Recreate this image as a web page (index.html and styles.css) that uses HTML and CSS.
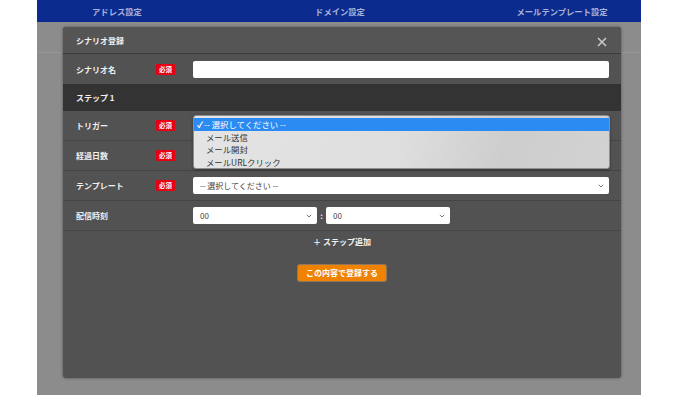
FILE: index.html
```html
<!DOCTYPE html>
<html lang="ja">
<head>
<meta charset="utf-8">
<title>シナリオ登録</title>
<link rel="stylesheet" href="styles.css">
</head>
<body>
<div class="screen">
  <nav class="nav">
    <span class="nav-item">アドレス設定</span>
    <span class="nav-item">ドメイン設定</span>
    <span class="nav-item">メールテンプレート設定</span>
  </nav>
  <div class="modal">
    <div class="modal-head">
      <span class="modal-title">シナリオ登録</span>
      <svg class="close" width="10" height="10" viewBox="0 0 10 10"><path d="M1 1 L9 9 M9 1 L1 9" stroke="#c8c8c8" stroke-width="1.6" fill="none"/></svg>
    </div>
    <div class="row first">
      <span class="label">シナリオ名</span>
      <span class="badge">必須</span>
      <div class="field"><div class="input"></div></div>
    </div>
    <div class="step">ステップ 1</div>
    <div class="row">
      <span class="label">トリガー</span>
      <span class="badge">必須</span>
      <div class="field anchor">
        <div class="select"></div>
        <ul class="popup">
          <li class="opt on"><span class="check">✓</span>-- 選択してください --</li>
          <li class="opt">メール送信</li>
          <li class="opt">メール開封</li>
          <li class="opt">メールURLクリック</li>
        </ul>
      </div>
    </div>
    <div class="row">
      <span class="label">経過日数</span>
      <span class="badge">必須</span>
      <div class="field"><div class="select"></div></div>
    </div>
    <div class="row">
      <span class="label">テンプレート</span>
      <span class="badge">必須</span>
      <div class="field">
        <div class="select"><span>-- 選択してください --</span>
          <svg class="chev" width="6" height="4" viewBox="0 0 6 4"><path d="M0.8 0.8 L3 3 L5.2 0.8" stroke="#777" stroke-width="1" fill="none"/></svg>
        </div>
      </div>
    </div>
    <div class="row">
      <span class="label">配信時刻</span>
      <span></span>
      <div class="field time">
        <div class="select short"><span>00</span>
          <svg class="chev" width="6" height="4" viewBox="0 0 6 4"><path d="M0.8 0.8 L3 3 L5.2 0.8" stroke="#777" stroke-width="1" fill="none"/></svg>
        </div>
        <span class="colon">:</span>
        <div class="select short"><span>00</span>
          <svg class="chev" width="6" height="4" viewBox="0 0 6 4"><path d="M0.8 0.8 L3 3 L5.2 0.8" stroke="#777" stroke-width="1" fill="none"/></svg>
        </div>
      </div>
    </div>
    <div class="foot">
      <span class="add">＋ ステップ追加</span>
      <span class="submit">この内容で登録する</span>
    </div>
  </div>
</div>
</body>
</html>
```

FILE: styles.css
```css
html, body {
  margin: 0;
  padding: 0;
  background: #ffffff;
}
body {
  font-family: "Noto Sans CJK JP", "Noto Sans", sans-serif;
  font-size: 8px;
}
.screen {
  width: 604px;
  height: 395px;
  margin-left: 37px;
  background: linear-gradient(to bottom, #8c8c8c 0, #8c8c8c 52px, #979797 52px, #979797 53px, #8c8c8c 53px);
  overflow: hidden;
}
.nav {
  height: 22px;
  background: #0b2b8e;
  display: flex;
  align-items: center;
}
.nav-item {
  color: #a9b3d8;
  font-weight: 700;
  font-size: 8.3px;
  text-align: center;
}
.nav-item:nth-child(1) { width: 162px; }
.nav-item:nth-child(2) { width: 290px; }
.nav-item:nth-child(3) { width: 160px; }
.modal {
  width: 558px;
  height: 351px;
  margin: 5px 0 0 26px;
  background: #525252;
  border-radius: 3px;
  box-shadow: 0 0 3px rgba(0, 0, 0, 0.45);
}
.modal-head {
  height: 26px;
  padding: 0 13px;
  display: flex;
  align-items: center;
  justify-content: space-between;
  background: #555555;
  border-bottom: 1px solid #3c3c3c;
  border-radius: 3px 3px 0 0;
}
.modal-title {
  color: #f2f2f2;
  font-weight: 700;
  font-size: 8px;
}
.close {
  margin-right: 1px;
  margin-top: 3px;
}
.row {
  display: grid;
  grid-template-columns: 80px 37px 1fr;
  align-items: center;
  height: 29px;
  padding: 0 12px 0 13px;
  border-bottom: 1px solid #444444;
}
.row.first {
  height: 30px;
  border-bottom: none;
}
.label {
  color: #f0f0f0;
  font-weight: 700;
  font-size: 8px;
}
.badge {
  justify-self: start;
  width: 19px;
  height: 11px;
  line-height: 11px;
  background: #e60012;
  color: #ffffff;
  font-weight: 700;
  font-size: 6.5px;
  text-align: center;
  border-radius: 1px;
}
.field {
  display: flex;
  align-items: center;
}
.anchor {
  position: relative;
}
.input {
  flex: 1;
  height: 17px;
  background: #ffffff;
  border-radius: 2px;
}
.select {
  flex: 1;
  height: 17px;
  background: #ffffff;
  border-radius: 2px;
  display: flex;
  align-items: center;
  justify-content: space-between;
  padding: 0 5px 0 7px;
  color: #444444;
  font-size: 8px;
}
.select.short {
  flex: 0 0 124px;
  box-sizing: border-box;
  width: 124px;
}
.colon {
  width: 9px;
  text-align: center;
  color: #e8e8e8;
  font-weight: 700;
  font-size: 8px;
}
.step {
  height: 27px;
  line-height: 27px;
  padding-left: 13px;
  background: #333333;
  color: #f2f2f2;
  font-weight: 700;
  font-size: 8px;
}
.popup {
  position: absolute;
  left: 0;
  right: -1px;
  top: -2px;
  height: 54px;
  margin: 0;
  padding: 2px 0 0 0;
  box-sizing: border-box;
  list-style: none;
  background: linear-gradient(100deg, #e4e4e4 0%, #dedede 50%, #cdcdcd 75%, #d2d2d2 100%);
  border: 1px solid #8f8f8f;
  border-radius: 3px;
  box-shadow: 0 1px 3px rgba(0, 0, 0, 0.35);
  z-index: 2;
}
.opt {
  height: 12.5px;
  line-height: 12.5px;
  padding-left: 12px;
  color: #333333;
  font-size: 8.4px;
}
.opt.on {
  background: #2b8bf2;
  color: #ffffff;
  padding-left: 3px;
}
.check {
  display: inline-block;
  width: 7px;
  font-weight: 700;
}
.foot {
  display: flex;
  flex-direction: column;
  align-items: center;
  padding-top: 5px;
}
.add {
  color: #f4f4f4;
  font-weight: 700;
  font-size: 8px;
  line-height: 12px;
}
.submit {
  margin-top: 17px;
  height: 16px;
  line-height: 16px;
  padding: 0 8px;
  background: #ef8200;
  color: #ffffff;
  font-weight: 700;
  font-size: 8px;
  border-radius: 2px;
  box-shadow: 0 0 0 1px rgba(255, 190, 120, 0.35);
}
```
